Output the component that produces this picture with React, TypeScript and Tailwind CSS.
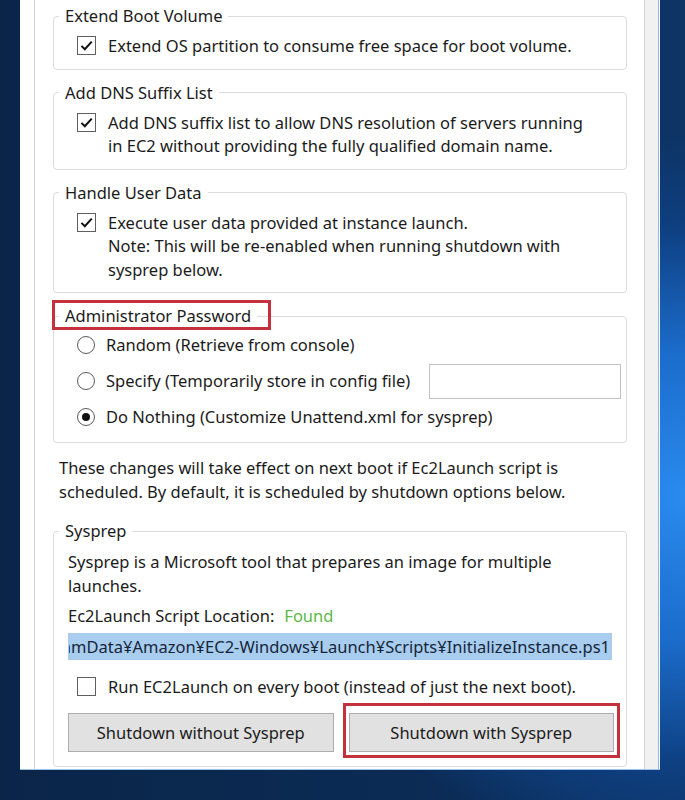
import type { ReactNode } from "react";

const PATH = "C:¥ProgramData¥Amazon¥EC2-Windows¥Launch¥Scripts¥InitializeInstance.ps1";

function CheckBox({ checked = false }: { checked?: boolean }) {
  return (
    <span className="mt-[2px] flex h-[19px] w-[19px] shrink-0 items-center justify-center border border-[#5f5f5f] bg-white">
      {checked && (
        <svg viewBox="0 0 16 16" className="h-[15px] w-[15px]">
          <path d="M2.6 8.4 6.2 12 13.6 3.8" fill="none" stroke="#111" strokeWidth="2.1" />
        </svg>
      )}
    </span>
  );
}

function Radio({ checked = false }: { checked?: boolean }) {
  return (
    <span className="flex h-[18px] w-[18px] shrink-0 items-center justify-center rounded-full border border-[#5a5a5a] bg-white">
      {checked && <span className="h-[8px] w-[8px] rounded-full bg-[#111]" />}
    </span>
  );
}

function Group({
  title,
  marked = false,
  className = "",
  children,
}: {
  title: string;
  marked?: boolean;
  className?: string;
  children: ReactNode;
}) {
  return (
    <fieldset className={`min-w-0 rounded-[4px] border border-[#dcdcdc] pl-[5px] ${className}`}>
      <legend className="relative px-[6px] leading-[22px]">
        {title}
        {marked && (
          <span className="pointer-events-none absolute -top-[5px] -right-[14px] -bottom-[3px] -left-[7px] border-[3px] border-[#c4313d]" />
        )}
      </legend>
      {children}
    </fieldset>
  );
}

function CheckRow({ checked, children }: { checked?: boolean; children: ReactNode }) {
  return (
    <div className="flex items-start gap-[12px]">
      <CheckBox checked={checked} />
      <div>{children}</div>
    </div>
  );
}

function RadioRow({ checked, label, children }: { checked?: boolean; label: string; children?: ReactNode }) {
  return (
    <div className="flex h-[36px] items-center">
      <Radio checked={checked} />
      <span className="ml-[11px]">{label}</span>
      {children}
    </div>
  );
}

export default function App() {
  return (
    <div className="h-[800px] w-[685px] overflow-hidden bg-[radial-gradient(ellipse_60%_45%_at_100%_62%,#2a8bef_0%,#1b6ccb_40%,#0e3f80_75%,transparent_100%),linear-gradient(90deg,#0a2548_0%,#0b2b55_60%,#0d3465_100%)] pl-[20px] font-['Segoe_UI','Noto_Sans',sans-serif] text-[16.5px] leading-[23.5px] text-[#1b1b1b]">
      <div className="flex h-[770px] w-[640px] border-b border-[#9cc3ea] bg-white">
        <div className="w-[14px] shrink-0" />

        <div className="flex w-[611px] shrink-0 flex-col border-x border-[#d2d2d2] pt-[5px] pr-[17px] pl-[18px]">
          <Group title="Extend Boot Volume">
            <div className="pt-[7px] pb-[11px] pl-[18px]">
              <CheckRow checked>Extend OS partition to consume free space for boot volume.</CheckRow>
            </div>
          </Group>

          <Group title="Add DNS Suffix List" className="mt-[12px]">
            <div className="pt-[7px] pb-[11px] pl-[18px]">
              <CheckRow checked>
                Add DNS suffix list to allow DNS resolution of servers running
                <br />
                in EC2 without providing the fully qualified domain name.
              </CheckRow>
            </div>
          </Group>

          <Group title="Handle User Data" className="mt-[12px]">
            <div className="pt-[7px] pb-[11px] pl-[18px]">
              <CheckRow checked>
                Execute user data provided at instance launch.
                <br />
                Note: This will be re-enabled when running shutdown with
                <br />
                sysprep below.
              </CheckRow>
            </div>
          </Group>

          <Group title="Administrator Password" marked className="mt-[12px]">
            <div className="pb-[7px] pl-[18px] pr-[5px]">
              <RadioRow label="Random (Retrieve from console)" />
              <RadioRow label="Specify (Temporarily store in config file)">
                <input
                  type="text"
                  className="ml-auto h-[35px] w-[192px] border border-[#c2c2c2] bg-white px-[6px] outline-none"
                />
              </RadioRow>
              <RadioRow checked label="Do Nothing (Customize Unattend.xml for sysprep)" />
            </div>
          </Group>

          <p className="mt-[13px] pl-[6px]">
            These changes will take effect on next boot if Ec2Launch script is
            <br />
            scheduled. By default, it is scheduled by shutdown options below.
          </p>

          <Group title="Sysprep" className="mt-[17px]">
            <div className="pt-[8px] pb-[14px] pr-[12px] pl-[9px]">
              <p>
                Sysprep is a Microsoft tool that prepares an image for multiple
                <br />
                launches.
              </p>

              <div className="mt-[7px]">
                Ec2Launch Script Location:
                <span className="ml-[10px] text-[#5db947]">Found</span>
              </div>

              <div className="mt-[5.5px] mr-[2px] flex h-[27px] min-w-0 items-center justify-end overflow-hidden border border-[#a9c9ea] bg-[#a8cdef] text-[#16263a]">
                <span className="shrink-0 whitespace-nowrap pr-[1px]">{PATH}</span>
              </div>

              <div className="mt-[15px] pl-[9px]">
                <CheckRow>Run EC2Launch on every boot (instead of just the next boot).</CheckRow>
              </div>

              <div className="mt-[14.5px] grid grid-cols-2 gap-[15px]">
                <button className="h-[39px] border border-[#adadad] bg-[#e1e1e1] text-center">
                  Shutdown without Sysprep
                </button>
                <div className="relative">
                  <button className="h-[39px] w-full border border-[#adadad] bg-[#e1e1e1] text-center">
                    Shutdown with Sysprep
                  </button>
                  <span className="pointer-events-none absolute -top-[10px] -right-[6px] -bottom-[6px] -left-[6px] border-[3px] border-[#c4313d]" />
                </div>
              </div>
            </div>
          </Group>
        </div>

        <div className="w-[14px] shrink-0 border-r border-[#8fbbe6] bg-[#f1f1f1]" />
      </div>
    </div>
  );
}
